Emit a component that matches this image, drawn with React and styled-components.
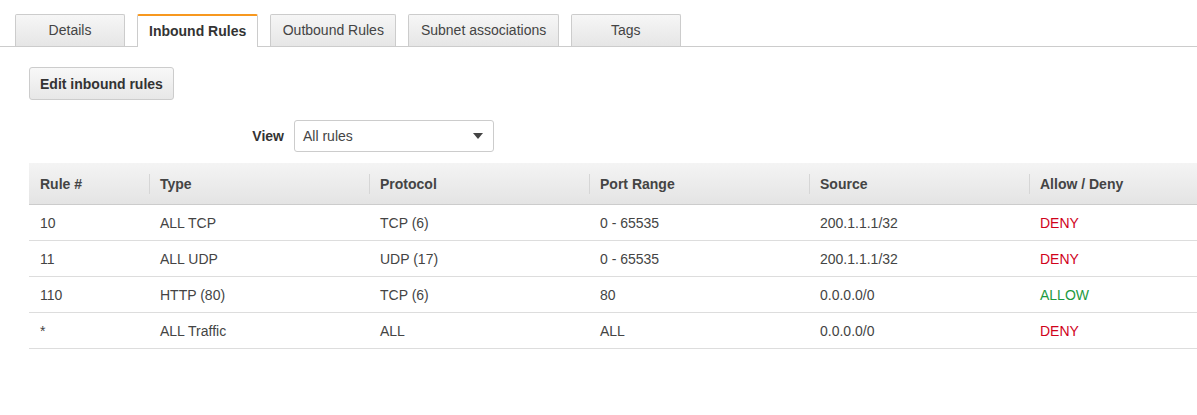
import React from 'react'
import styled, { createGlobalStyle } from 'styled-components'

const Global = createGlobalStyle`
  body {
    margin: 0;
    background: #fff;
    font-family: "Liberation Sans", Arial, sans-serif;
    color: #444;
  }
`

const Page = styled.div`
  padding-top: 14px;
`

const TabBar = styled.div`
  display: flex;
  gap: 12px;
  padding-left: 15px;
  border-bottom: 1px solid #ccc;
`

const Tab = styled.div`
  box-sizing: border-box;
  min-width: 110px;
  height: ${p => (p.active ? '33px' : '32px')};
  margin-bottom: ${p => (p.active ? '-1px' : '0')};
  padding: ${p => (p.active ? '0 11px 1px' : '0 11.5px 2px')};
  display: flex;
  align-items: center;
  justify-content: center;
  font-size: 14px;
  font-weight: ${p => (p.active ? 'bold' : 'normal')};
  color: ${p => (p.active ? '#333' : '#444')};
  border: 1px solid #ccc;
  border-bottom: none;
  border-top: ${p => (p.active ? '2px solid #f7981f' : '1px solid #ccc')};
  border-radius: 2px 2px 0 0;
  background: ${p => (p.active ? '#fff' : 'linear-gradient(#f6f6f6, #e6e6e6)')};
`

const Content = styled.div`
  padding: 20px 0 0 29px;
`

const Button = styled.button`
  box-sizing: border-box;
  height: 33px;
  padding: 0 10px;
  font-family: inherit;
  font-size: 14px;
  font-weight: bold;
  color: #333;
  border: 1px solid #ccc;
  border-radius: 3px;
  background: linear-gradient(#f8f8f8, #e7e7e7);
`

const ViewRow = styled.div`
  display: flex;
  align-items: center;
  gap: 10px;
  margin-top: 20px;
`

const ViewLabel = styled.label`
  width: 255px;
  text-align: right;
  font-size: 14px;
  font-weight: bold;
  color: #333;
`

const Select = styled.div`
  box-sizing: border-box;
  width: 200px;
  height: 32px;
  padding: 0 10px 0 8px;
  display: flex;
  align-items: center;
  justify-content: space-between;
  font-size: 14px;
  color: #444;
  border: 1px solid #ccc;
  border-radius: 3px;
  background: #fff;
`

const Caret = styled.span`
  width: 0;
  height: 0;
  border-left: 5px solid transparent;
  border-right: 5px solid transparent;
  border-top: 6px solid #444;
`

const Table = styled.table`
  margin-top: 11px;
  width: 100%;
  border-collapse: collapse;
  table-layout: fixed;
  font-size: 14px;
`

const Th = styled.th`
  height: 41px;
  padding: 0;
  text-align: left;
  font-weight: bold;
  color: #444;
  background: linear-gradient(#f4f4f4, #e4e4e4);
  border-bottom: 1px solid #ccc;
`

const HeadLabel = styled.div`
  line-height: 20px;
  padding-left: ${p => (p.first ? '11px' : '10px')};
  border-left: ${p => (p.first ? 'none' : '1px solid #d6d6d6')};
`

const Td = styled.td`
  height: 35px;
  padding: 0 0 0 11px;
  color: ${p => p.tone || '#444'};
  border-bottom: 1px solid #ddd;
`

const columns = [
  { label: 'Rule #', width: 120 },
  { label: 'Type', width: 220 },
  { label: 'Protocol', width: 220 },
  { label: 'Port Range', width: 220 },
  { label: 'Source', width: 220 },
  { label: 'Allow / Deny' },
]

const rules = [
  ['10', 'ALL TCP', 'TCP (6)', '0 - 65535', '200.1.1.1/32', 'DENY'],
  ['11', 'ALL UDP', 'UDP (17)', '0 - 65535', '200.1.1.1/32', 'DENY'],
  ['110', 'HTTP (80)', 'TCP (6)', '80', '0.0.0.0/0', 'ALLOW'],
  ['*', 'ALL Traffic', 'ALL', 'ALL', '0.0.0.0/0', 'DENY'],
]

const tabs = ['Details', 'Inbound Rules', 'Outbound Rules', 'Subnet associations', 'Tags']

const App = () => {
  return (
    <>
      <Global />
      <Page>
        <TabBar>
          {tabs.map(t => (
            <Tab key={t} active={t === 'Inbound Rules'}>{t}</Tab>
          ))}
        </TabBar>
        <Content>
          <Button>Edit inbound rules</Button>
          <ViewRow>
            <ViewLabel>View</ViewLabel>
            <Select>
              All rules
              <Caret />
            </Select>
          </ViewRow>
          <Table>
            <colgroup>
              {columns.map(c => (
                <col key={c.label} style={c.width ? { width: c.width } : undefined} />
              ))}
            </colgroup>
            <thead>
              <tr>
                {columns.map((c, i) => (
                  <Th key={c.label}>
                    <HeadLabel first={i === 0}>{c.label}</HeadLabel>
                  </Th>
                ))}
              </tr>
            </thead>
            <tbody>
              {rules.map(r => (
                <tr key={r[0]}>
                  {r.map((v, i) => (
                    <Td
                      key={i}
                      tone={i === 5 ? (v === 'ALLOW' ? '#1d9a3f' : '#d0021b') : undefined}
                    >
                      {v}
                    </Td>
                  ))}
                </tr>
              ))}
            </tbody>
          </Table>
        </Content>
      </Page>
    </>
  )
}

export default App
